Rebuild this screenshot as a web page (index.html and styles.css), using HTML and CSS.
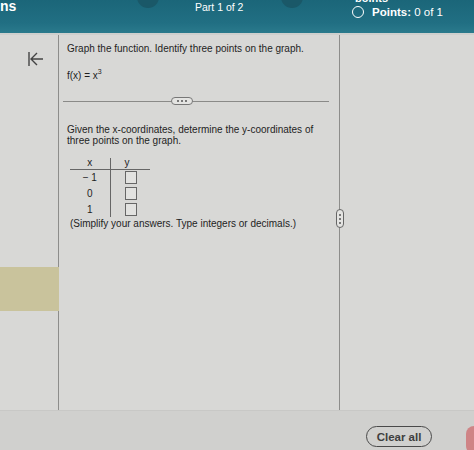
FILE: index.html
```html
<!DOCTYPE html>
<html>
<head>
<meta charset="utf-8">
<link rel="stylesheet" href="styles.css">
</head>
<body>
<div class="page">
  <header class="topbar">
    <div class="title-frag">ns</div>
    <div class="dot dot-left"></div>
    <div class="part">Part 1 of 2</div>
    <div class="dot dot-right"></div>
    <div class="points">
      <div class="points-cut">points</div>
      <div class="points-row"><span class="ring"></span><b>Points:</b>&nbsp;0 of 1</div>
    </div>
  </header>
  <div class="body-row">
    <aside class="sidebar">
      <svg class="back" width="18" height="16" viewBox="0 0 18 16"><path d="M2 1v14M16 8H4M10 2L4 8l6 6" fill="none" stroke="#444" stroke-width="1.4"/></svg>
      <div class="highlight"></div>
    </aside>
    <main class="question">
      <p class="prompt">Graph the function. Identify three points on the graph.</p>
      <p class="fn">f(x) = x<sup>3</sup></p>
      <div class="divider"><span class="pill"><i></i><i></i><i></i></span></div>
      <p class="given">Given the x-coordinates, determine the y-coordinates of three points on the graph.</p>
      <table class="xy">
        <tr><th class="cx">x</th><th class="cy">y</th></tr>
        <tr><td class="cx">− 1</td><td class="cy"><span class="box"></span></td></tr>
        <tr><td class="cx">0</td><td class="cy"><span class="box"></span></td></tr>
        <tr><td class="cx">1</td><td class="cy"><span class="box"></span></td></tr>
      </table>
      <p class="note">(Simplify your answers. Type integers or decimals.)</p>
    </main>
    <section class="side-panel">
      <span class="vpill"><i></i><i></i><i></i></span>
    </section>
  </div>
  <footer class="footer">
    <button class="clear">Clear all</button>
    <span class="red"></span>
  </footer>
</div>
</body>
</html>
```
FILE: styles.css
```css
* { box-sizing: border-box; }
html, body { margin: 0; padding: 0; }
body {
  width: 474px; height: 450px; overflow: hidden;
  font-family: "Liberation Sans", Arial, sans-serif;
  background: #d8d8d6;
  color: #1e1e1e;
}
.page { display: flex; flex-direction: column; height: 450px; }
.topbar {
  position: relative;
  height: 33px; flex: none;
  background: linear-gradient(180deg, #1b6679 0%, #216f83 70%, #2a7a8c 100%);
  color: #fff;
  display: flex; align-items: flex-start;
}
.title-frag { font-weight: bold; font-size: 14px; margin-top: -2px; padding-left: 0; width: 40px; }
.dot { position: absolute; top: -14px; width: 22px; height: 22px; border-radius: 50%; background: #1a5868; }
.dot-left { left: 137px; }
.dot-right { left: 281px; }
.part { position: absolute; left: 195px; top: 1px; font-size: 10.5px; }
.points { position: absolute; left: 352px; top: -6px; font-size: 11.5px; }
.points-cut { font-weight: bold; font-size: 11px; height: 8px; overflow: hidden; padding-left: 3px; line-height: 9px; }
.points-row { display: flex; align-items: center; margin-top: 4px; }
.ring { width: 12px; height: 12px; border: 1.6px solid #fff; border-radius: 50%; margin-right: 8px; }
.body-row { flex: 1; display: flex; border-top: 2px solid #cfd0ce; }
.sidebar { width: 59px; flex: none; border-right: 1px solid #8d8d8b; position: relative; padding-top: 16px; padding-left: 27px; }
.back { display: block; }
.highlight { position: absolute; left: 0; top: 232px; width: 59px; height: 44px; background: #c9c39c; }
.question { width: 281px; flex: none; border-right: 1px solid #8d8d8b; padding: 8px 0 0 8px; font-size: 10px; }
.question p { margin: 0; }
.prompt { line-height: 12px; }
.fn { margin-top: 13px !important; }
.fn sup { font-size: 7px; vertical-align: 5px; }
.divider { position: relative; margin: 20px 10px 0 -4px; height: 1px; background: #8a8a88; }
.pill {
  position: absolute; left: 108px; top: -4px; width: 22px; height: 8px;
  border: 1px solid #777; border-radius: 4px; background: #e4e4e2;
  display: flex; align-items: center; justify-content: center; gap: 2px;
}
.pill i, .vpill i { display: block; width: 2px; height: 2px; background: #555; border-radius: 50%; }
.given { margin-top: 22px !important; width: 262px; line-height: 11px; }
.xy { border-collapse: collapse; margin-top: 12px; margin-left: 3px; font-size: 10px; }
.xy th { font-weight: normal; border-bottom: 1px solid #666; height: 11px; padding: 0; line-height: 10px; }
.xy td { padding: 0; height: 16px; }
.xy .cx { width: 40px; text-align: center; border-right: 1px solid #666; }
.xy .cy { width: 40px; text-align: left; padding-left: 14px; }
.box { display: block; width: 12px; height: 13px; border: 1px solid #666; background: #e2e2e0; }
.note { margin-top: 1px !important; padding-left: 3px; }
.side-panel { flex: 1; position: relative; }
.vpill {
  position: absolute; left: -4px; top: 174px; width: 8px; height: 19px;
  border: 1px solid #666; border-radius: 4px; background: #e4e4e2;
  display: flex; flex-direction: column; align-items: center; justify-content: center; gap: 2px;
}
.footer { height: 40px; flex: none; background: #d0d0ce; border-top: 1px solid #c8c8c6; position: relative; display: flex; justify-content: flex-end; align-items: flex-end; padding: 0 42px 3px 0; }
.clear {
  font-family: "Liberation Sans", Arial, sans-serif; font-weight: bold; font-size: 11.5px;
  color: #3f3f3f; background: transparent; border: 1.5px solid #4a4a4a; border-radius: 11px;
  width: 66px; height: 21px; padding: 0;
}
.red { position: absolute; right: -8px; bottom: -4px; width: 16px; height: 28px; border-radius: 8px; background: #cf8486; }
```
